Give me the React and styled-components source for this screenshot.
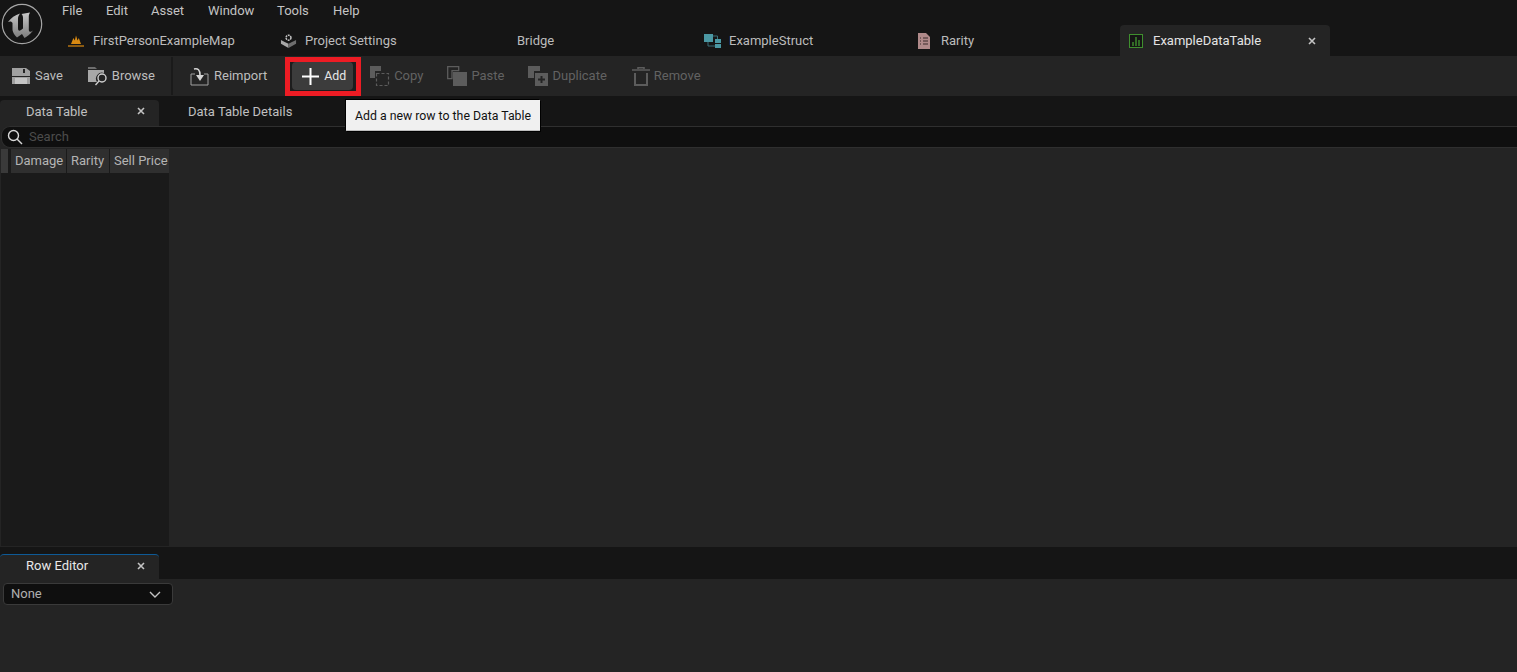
import React from "react";
import styled, { createGlobalStyle } from "styled-components";

const GlobalStyle = createGlobalStyle`
  html, body {
    margin: 0;
    padding: 0;
    height: 100%;
    background: #151515;
    overflow: hidden;
  }
  #root {
    height: 100%;
  }
`;

const Page = styled.div`
  position: relative;
  width: 1517px;
  height: 672px;
  display: flex;
  flex-direction: column;
  font-family: Roboto, "Liberation Sans", sans-serif;
  font-size: 13px;
  color: #c0c0c0;
  background: #151515;
`;

const TitleBar = styled.div`
  height: 56px;
  display: flex;
  background: #151515;
`;

const LogoSlot = styled.div`
  width: 60px;
  padding: 3px 0 0 1px;
  box-sizing: border-box;
`;

const TitleColumn = styled.div`
  flex: 1;
  display: flex;
  flex-direction: column;
`;

const MenuBar = styled.div`
  height: 25px;
  display: flex;
  align-items: center;
  padding: 0 0 5px 2px;
  box-sizing: border-box;
`;

const MenuItem = styled.span`
  width: ${(p) => p.$w}px;
  color: #c4c4c4;
`;

const DocTabs = styled.div`
  height: 31px;
  display: flex;
  gap: 2px;
`;

const DocTab = styled.div`
  width: 210px;
  height: 31px;
  box-sizing: border-box;
  display: flex;
  align-items: center;
  padding-left: 8px;
  border-radius: 4px 4px 0 0;
  background: ${(p) => (p.$active ? "#242424" : "transparent")};
  color: ${(p) => (p.$active ? "#e4e4e4" : "#bcbcbc")};
`;

const DocIcon = styled.span`
  width: 25px;
  height: 20px;
  flex: none;
  display: flex;
  align-items: center;
  box-sizing: border-box;
  padding-left: ${(p) => p.$shift || 0}px;
`;

const DocLabel = styled.span`
  flex: 1;
`;

const TabClose = styled.span`
  width: 8px;
  height: 8px;
  margin-right: ${(p) => p.$right}px;
  display: flex;
  color: #c4c4c4;
`;

const Toolbar = styled.div`
  height: 40px;
  display: flex;
  align-items: center;
  padding-left: 12px;
  background: #242424;
  box-sizing: border-box;
`;

const Tool = styled.div`
  display: flex;
  align-items: center;
  margin-right: ${(p) => p.$after}px;
  color: ${(p) => (p.$off ? "#626262" : "#bdbdbd")};
`;

const ToolIcon = styled.span`
  width: ${(p) => p.$w || 23}px;
  height: 20px;
  flex: none;
  display: flex;
  align-items: center;
`;

const ToolLabel = styled.span`
  padding-bottom: 2px;
`;

const Separator = styled.div`
  width: 2px;
  height: 38px;
  background: #1a1a1a;
  margin-right: ${(p) => p.$after}px;
`;

const HighlightBox = styled.div`
  width: 76px;
  height: 39px;
  margin: 1px 9px 0 0;
  padding: 0 3px 1px 2px;
  box-sizing: border-box;
  border: 5px solid #ed1c24;
  background: #1d1d1d;
`;

const AddButton = styled.div`
  height: 100%;
  display: flex;
  align-items: center;
  padding-left: 10px;
  background: #3c3c3c;
  border-radius: 4px;
  color: #e6e6e6;
  font-size: 12.4px;
`;

const PanelStrip = styled.div`
  height: ${(p) => p.$h}px;
  display: flex;
  align-items: flex-end;
  background: #151515;
  box-sizing: border-box;
`;

const PanelTab = styled.div`
  width: ${(p) => p.$w || 159}px;
  height: ${(p) => p.$h}px;
  box-sizing: border-box;
  display: flex;
  align-items: center;
  padding-left: ${(p) => p.$pad || 26}px;
  padding-bottom: ${(p) => (p.$accent ? 3 : 4)}px;
  border-radius: 4px 4px 0 0;
  background: ${(p) => (p.$active ? "#242424" : "transparent")};
  color: ${(p) => (p.$bright ? "#e8e8e8" : "#c0c0c0")};
  border-top: ${(p) => (p.$accent ? "1px solid #0e5a96" : "none")};
`;

const PanelLabel = styled.span`
  flex: 1;
`;

const TablePanel = styled.div`
  height: 421px;
  display: flex;
  flex-direction: column;
  background: #242424;
  box-sizing: border-box;
`;

const SearchBar = styled.div`
  height: 22px;
  margin-left: 1px;
  display: flex;
  align-items: center;
  gap: 6px;
  padding-left: 5px;
  background: #0f0f0f;
  border: 1px solid #2f2f2f;
  border-width: 1px 0 1px 1px;
  border-radius: 9px 0 0 9px;
  box-sizing: border-box;
  color: #4c4c4c;
`;

const SearchText = styled.span`
  padding-bottom: 2px;
`;

const TableArea = styled.div`
  flex: 1;
  display: flex;
  padding-top: 1px;
`;

const RowColumn = styled.div`
  width: 168px;
  margin-left: 1px;
  background: #1a1a1a;
  box-sizing: border-box;
  margin-bottom: 1px;
`;

const HeaderRow = styled.div`
  height: 24px;
  display: flex;
  gap: 1px;
  background: #1a1a1a;
`;

const HeaderCell = styled.div`
  width: ${(p) => p.$w}px;
  flex: none;
  box-sizing: border-box;
  display: flex;
  align-items: center;
  padding: 0 0 2px ${(p) => p.$pad}px;
  background: #2f2f2f;
  color: #b4b4b4;
  white-space: nowrap;
`;

const RowGrip = styled.div`
  width: 7px;
  margin-right: 2px;
  flex: none;
  background: #3a3a3a;
`;

const PanelGap = styled.div`
  height: 7px;
  background: #151515;
`;

const EditorPanel = styled.div`
  flex: 1;
  padding: 4px 0 0 3px;
  background: #242424;
`;

const Select = styled.div`
  width: 170px;
  height: 22px;
  display: flex;
  align-items: center;
  justify-content: space-between;
  padding: 0 11px 0 7px;
  box-sizing: border-box;
  background: #0f0f0f;
  border: 1px solid #3a3a3a;
  border-radius: 4px;
  color: #b0b0b0;
`;

const SelectValue = styled.span`
  padding-bottom: 2px;
`;

const Tooltip = styled.div`
  position: absolute;
  left: 346px;
  top: 100px;
  width: 194px;
  height: 31px;
  display: flex;
  align-items: center;
  justify-content: center;
  padding-top: 2px;
  box-sizing: border-box;
  background: #f0f0f0;
  border-bottom: 1px solid #bdbdbd;
  box-shadow: 1px 1px 0 #000, -1px -1px 0 #000;
  color: #111;
  font-size: 12.3px;
`;

const CloseIcon = () => (
  <svg width="8" height="8" viewBox="0 0 8 8">
    <path d="M1 1l6 6M7 1L1 7" stroke="currentColor" strokeWidth="1.6" />
  </svg>
);

const UnrealLogo = () => (
  <svg width="42" height="42" viewBox="0 0 42 42">
    <defs>
      <linearGradient id="ueFill" x1="0" y1="0" x2="0" y2="1">
        <stop offset="0" stopColor="#c8c8c8" />
        <stop offset="1" stopColor="#7c7c7c" />
      </linearGradient>
    </defs>
    <circle cx="21" cy="21" r="19.7" fill="#151515" stroke="#a6a6a6" strokeWidth="1.2" />
    <path
      d="M7 19C10 15 14 12 19 10.5 17.5 12.5 17 14 17 16V25C17 27.5 18 28.5 20 27L22 25.5V15C22 13 21.5 12 20.5 11L29 9.5C28 11 27.8 12.5 27.8 14V27C28 29 29.5 29.5 32 27.5 29 31.5 26 33.5 23.5 35L21 31 16 34.5C13.5 32 12 30 11.5 27V20C11 18.5 9 18 7 19Z"
      fill="url(#ueFill)"
    />
  </svg>
);

const MapIcon = () => (
  <svg width="16" height="14" viewBox="0 0 16 14">
    <path d="M3 10l2.4-6 1.4 2.6L8 1.5l1.6 5 1.2-2.6L13 10z" fill="#d98a12" />
    <rect x="0" y="11" width="16" height="2" fill="#8a5a12" />
  </svg>
);

const SettingsIcon = () => (
  <svg width="17" height="16" viewBox="0 0 18 16">
    <circle cx="9" cy="4.5" r="2.6" fill="none" stroke="#c4c4c4" strokeWidth="1.6" strokeDasharray="2 0.8" />
    <path d="M1 7l4 2 4 2v4.5L1 11z" fill="#a8a8a8" />
    <path d="M17 7l-8 4v4.5l8-4.5z" fill="#6e6e6e" />
  </svg>
);

const StructIcon = () => (
  <svg width="17" height="14" viewBox="0 0 17 14">
    <rect x="0" y="0" width="9" height="8" fill="#4b98a3" />
    <rect x="11" y="5" width="6" height="4" fill="#4b98a3" />
    <rect x="11" y="10" width="6" height="4" fill="#4b98a3" />
    <path d="M4 8v4h7M9 2h4.5v3" fill="none" stroke="#3a6f78" strokeWidth="1" />
  </svg>
);

const EnumIcon = () => (
  <svg width="12" height="16" viewBox="0 0 12 16">
    <path d="M0 0h8l4 4v12H0z" fill="#b08a8a" />
    <path d="M2 5h1M5 5h5M2 8h1M5 8h5M2 11h1M5 11h5" stroke="#3a2a2a" strokeWidth="1.2" />
  </svg>
);

const TableIcon = () => (
  <svg width="14" height="14" viewBox="0 0 14 14">
    <rect x="0.5" y="0.5" width="13" height="13" fill="#151515" stroke="#3f8f2e" />
    <path d="M4 12V8M7 12V3M10 12V6" stroke="#3f8f2e" strokeWidth="1.4" />
  </svg>
);

const SaveIcon = () => (
  <svg width="18" height="18" viewBox="0 0 18 18">
    <path d="M0 1h14l4 3v13H0z" fill="#a0a0a0" />
    <rect x="11" y="2" width="2" height="4" fill="#242424" />
    <rect x="0" y="9" width="18" height="1" fill="#242424" />
    <rect x="3" y="11" width="12" height="6" fill="#c4c4c4" />
  </svg>
);

const BrowseIcon = () => (
  <svg width="20" height="20" viewBox="0 0 20 20">
    <path d="M0 1h7l2 2H0z" fill="#6e6e6e" />
    <path d="M0 4h16v3a6 6 0 0 0-7 9H0z" fill="#a8a8a8" />
    <circle cx="14" cy="12" r="4" fill="none" stroke="#d0d0d0" strokeWidth="1.4" />
    <path d="M11 15l-3.5 4" stroke="#d0d0d0" strokeWidth="1.4" />
  </svg>
);

const ReimportIcon = () => (
  <svg width="19" height="19" viewBox="0 0 19 19">
    <path d="M5 7H1v11h17V7h-4" fill="none" stroke="#a0a0a0" strokeWidth="1" />
    <path d="M4 2c4-1 6 1 6 6" fill="none" stroke="#d4d4d4" strokeWidth="1.6" />
    <path d="M6 8h8l-4 6z" fill="#d4d4d4" />
  </svg>
);

const PlusIcon = () => (
  <svg width="17" height="17" viewBox="0 0 17 17">
    <path d="M8.5 0v17M0 8.5h17" stroke="#fff" strokeWidth="2" />
  </svg>
);

const CopyIcon = () => (
  <svg width="20" height="20" viewBox="0 0 20 20">
    <path d="M0 0h11v5H5v7H0z" fill="#5c5c5c" />
    <rect x="6.5" y="7.5" width="12" height="12" fill="none" stroke="#5c5c5c" strokeWidth="1.2" strokeDasharray="3 2" />
  </svg>
);

const PasteIcon = () => (
  <svg width="20" height="20" viewBox="0 0 20 20">
    <path d="M0.7 0.7h11v4H5v8H0.7z" fill="none" stroke="#5c5c5c" strokeWidth="1.3" />
    <rect x="6" y="6" width="14" height="14" fill="#5c5c5c" />
  </svg>
);

const DuplicateIcon = () => (
  <svg width="20" height="20" viewBox="0 0 20 20">
    <path d="M0 0h12v5H6v7H0z" fill="#5c5c5c" />
    <rect x="7" y="7" width="13" height="13" fill="#5c5c5c" />
    <path d="M13.5 10v7M10 13.5h7" stroke="#242424" strokeWidth="2" />
  </svg>
);

const RemoveIcon = () => (
  <svg width="18" height="19" viewBox="0 0 18 19">
    <path d="M6 2V0.7h6V2M0 3h18" fill="none" stroke="#5c5c5c" strokeWidth="1.6" />
    <path d="M3 6v12h12V6" fill="none" stroke="#5c5c5c" strokeWidth="2" />
  </svg>
);

const SearchIcon = () => (
  <svg width="16" height="16" viewBox="0 0 16 16">
    <circle cx="6.5" cy="6.5" r="5" fill="none" stroke="#d8d8d8" strokeWidth="1.4" />
    <path d="M10 10l5 5" stroke="#d8d8d8" strokeWidth="1.4" />
  </svg>
);

const ChevronIcon = () => (
  <svg width="12" height="7" viewBox="0 0 12 7">
    <path d="M1 1l5 5 5-5" fill="none" stroke="#c4c4c4" strokeWidth="1.4" />
  </svg>
);

const menuItems = [
  { label: "File", w: 44 },
  { label: "Edit", w: 45 },
  { label: "Asset", w: 57 },
  { label: "Window", w: 69 },
  { label: "Tools", w: 56 },
  { label: "Help", w: 40 },
];

const docTabs = [
  { label: "FirstPersonExampleMap", icon: <MapIcon /> },
  { label: "Project Settings", icon: <SettingsIcon /> },
  { label: "Bridge", icon: null },
  { label: "ExampleStruct", icon: <StructIcon /> },
  { label: "Rarity", icon: <EnumIcon />, shift: 2 },
];

const disabledTools = [
  { label: "Copy", icon: <CopyIcon />, w: 24, after: 24 },
  { label: "Paste", icon: <PasteIcon />, w: 24, after: 24 },
  { label: "Duplicate", icon: <DuplicateIcon />, w: 24, after: 25 },
  { label: "Remove", icon: <RemoveIcon />, w: 22, after: 0 },
];

export default function App() {
  return (
    <Page>
      <GlobalStyle />
      <TitleBar>
        <LogoSlot>
          <UnrealLogo />
        </LogoSlot>
        <TitleColumn>
          <MenuBar>
            {menuItems.map((m) => (
              <MenuItem key={m.label} $w={m.w}>
                {m.label}
              </MenuItem>
            ))}
          </MenuBar>
          <DocTabs>
            {docTabs.map((t) => (
              <DocTab key={t.label}>
                <DocIcon $shift={t.shift}>{t.icon}</DocIcon>
                <DocLabel>{t.label}</DocLabel>
              </DocTab>
            ))}
            <DocTab $active>
              <DocIcon $shift={1}>
                <TableIcon />
              </DocIcon>
              <DocLabel>ExampleDataTable</DocLabel>
              <TabClose $right={14}>
                <CloseIcon />
              </TabClose>
            </DocTab>
          </DocTabs>
        </TitleColumn>
      </TitleBar>

      <Toolbar>
        <Tool $after={25}>
          <ToolIcon>
            <SaveIcon />
          </ToolIcon>
          <ToolLabel>Save</ToolLabel>
        </Tool>
        <Tool $after={16}>
          <ToolIcon $w={24}>
            <BrowseIcon />
          </ToolIcon>
          <ToolLabel>Browse</ToolLabel>
        </Tool>
        <Separator $after={17} />
        <Tool $after={18}>
          <ToolIcon $w={24}>
            <ReimportIcon />
          </ToolIcon>
          <ToolLabel>Reimport</ToolLabel>
        </Tool>
        <HighlightBox>
          <AddButton>
            <ToolIcon $w={22}>
              <PlusIcon />
            </ToolIcon>
            <ToolLabel>Add</ToolLabel>
          </AddButton>
        </HighlightBox>
        {disabledTools.map((t) => (
          <Tool key={t.label} $off $after={t.after}>
            <ToolIcon $w={t.w}>{t.icon}</ToolIcon>
            <ToolLabel>{t.label}</ToolLabel>
          </Tool>
        ))}
      </Toolbar>

      <PanelStrip $h={30}>
        <PanelTab $active $h={26}>
          <PanelLabel>Data Table</PanelLabel>
          <TabClose $right={14}>
            <CloseIcon />
          </TabClose>
        </PanelTab>
        <PanelTab $h={26} $w={180} $pad={29}>
          <PanelLabel>Data Table Details</PanelLabel>
        </PanelTab>
      </PanelStrip>

      <TablePanel>
        <SearchBar>
          <SearchIcon />
          <SearchText>Search</SearchText>
        </SearchBar>
        <TableArea>
          <RowColumn>
            <HeaderRow>
              <RowGrip />
              <HeaderCell $w={55} $pad={4}>
                Damage
              </HeaderCell>
              <HeaderCell $w={42} $pad={4}>
                Rarity
              </HeaderCell>
              <HeaderCell $w={59} $pad={4}>
                Sell Price
              </HeaderCell>
            </HeaderRow>
          </RowColumn>
        </TableArea>
      </TablePanel>

      <PanelGap />

      <PanelStrip $h={25}>
        <PanelTab $active $bright $accent $h={25}>
          <PanelLabel>Row Editor</PanelLabel>
          <TabClose $right={14}>
            <CloseIcon />
          </TabClose>
        </PanelTab>
      </PanelStrip>

      <EditorPanel>
        <Select>
          <SelectValue>None</SelectValue>
          <ChevronIcon />
        </Select>
      </EditorPanel>

      <Tooltip>Add a new row to the Data Table</Tooltip>
    </Page>
  );
}
